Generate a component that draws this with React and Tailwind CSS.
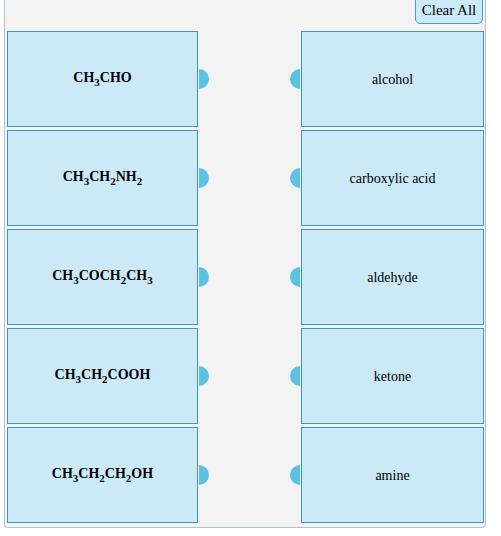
import React from 'react';

const PAIRS = [
  { formula: ['CH', ['3'], 'CHO'], name: 'alcohol' },
  { formula: ['CH', ['3'], 'CH', ['2'], 'NH', ['2']], name: 'carboxylic acid' },
  { formula: ['CH', ['3'], 'COCH', ['2'], 'CH', ['3']], name: 'aldehyde' },
  { formula: ['CH', ['3'], 'CH', ['2'], 'COOH'], name: 'ketone' },
  { formula: ['CH', ['3'], 'CH', ['2'], 'CH', ['2'], 'OH'], name: 'amine' },
];

// strings render inline, one-item arrays become subscripts
function Formula({ parts }) {
  return (
    <span className="font-bold text-[14px] text-black -mt-[3px]">
      {parts.map((p, i) =>
        Array.isArray(p) ? (
          <sub key={i} className="text-[11px] relative top-[4px] bottom-auto">{p[0]}</sub>
        ) : (
          <span key={i}>{p}</span>
        )
      )}
    </span>
  );
}

function Row({ formula, name }) {
  return (
    <div className="flex items-center h-[96px]">
      <div className="w-[191px] h-full bg-[#cbe9f7] border border-[#3a96c2] flex items-center justify-center">
        <Formula parts={formula} />
      </div>
      <div className="ml-[1px] w-[10px] h-[20px] bg-[#5bc2e3] rounded-r-full" />
      <div className="flex-1" />
      <div className="mr-[1px] w-[10px] h-[20px] bg-[#5bc2e3] rounded-l-full" />
      <div className="w-[183px] h-full bg-[#cbe9f7] border border-[#3a96c2] flex items-center justify-center text-[14px] text-black">
        {name}
      </div>
    </div>
  );
}

export default function App() {
  return (
    <div className="w-[501px] h-[536px] bg-white overflow-hidden" style={{ fontFamily: '"Liberation Serif", "Times New Roman", serif' }}>
      <div className="ml-[4px] w-[482px] h-[528px] bg-[#f3f3f3] border-l border-r border-b border-[#b4c0cc] rounded-b-[4px] flex flex-col">
        <div className="flex justify-end h-[31px] pr-[2px]">
          <button
            type="button"
            className="-mt-[6px] h-[30px] w-[68px] bg-[#cbe9f7] border border-[#4c9dc4] rounded-[5px] text-[15px] leading-none pt-[3px] text-black"
          >
            Clear All
          </button>
        </div>
        <div className="flex flex-col gap-[3px] pl-[2px] pr-[1px]">
          {PAIRS.map((p) => (
            <Row key={p.name} formula={p.formula} name={p.name} />
          ))}
        </div>
      </div>
    </div>
  );
}
